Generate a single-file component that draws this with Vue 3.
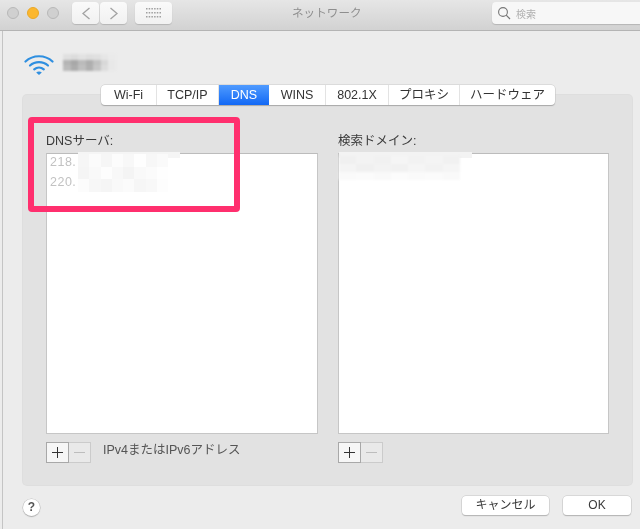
<script setup>
const tabs = [
  { label: 'Wi-Fi', w: 56 },
  { label: 'TCP/IP', w: 62 },
  { label: 'DNS', w: 50, active: true },
  { label: 'WINS', w: 57 },
  { label: '802.1X', w: 63 },
  { label: 'プロキシ', w: 71 },
  { label: 'ハードウェア', w: 95 }
]
const nameCells = ['#e0e0e0','#dcdcdc','#e2e2e2','#dedede','#e0e0e0','#e6e6e6','#eaeaea','#b4b4b4','#a8a8a8','#bbbbbb','#aeaeae','#c2c2c2','#d8d8d8','#e8e8e8','#bbbbbb','#acacac','#bfbfbf','#b0b0b0','#c6c6c6','#dcdcdc','#e8e8e8']
const dnsCells = ['#f6f6f6','#fbfbfb','#f6f6f6','#fcfcfc','#f8f8f8','#fefefe','#f7f7f7','#fafafa','#f5f5f5','#f9f9f9','#fdfdfd','#f8f8f8','#f4f4f4','#f9f9f9','#fbfbfb','#fefefe','#fcfcfc','#f7f7f7','#f5f5f5','#f9f9f9','#fbfbfb','#f6f6f6','#f8f8f8','#fdfdfd']
const domainCells = ['#f0f0f0','#f3f3f3','#f1f1f1','#f5f5f5','#f2f2f2','#f4f4f4','#f1f1f1','#f4f4f4','#f0f0f0','#f3f3f3','#f1f1f1','#f5f5f5','#f2f2f2','#f5f5f5','#fafafa','#fbfbfb','#f9f9f9','#fcfcfc','#fafafa','#fbfbfb','#f9f9f9']
</script>

<template>
  <div class="window">
    <header class="titlebar">
      <div class="lights">
        <span class="light"></span>
        <span class="light amber"></span>
        <span class="light"></span>
      </div>
      <div class="nav">
        <button class="tool"><svg width="10" height="13" viewBox="0 0 10 13"><path d="M8.5 1 2 6.5 8.5 12" fill="none" stroke="#a2a2a2" stroke-width="1.3"/></svg></button>
        <button class="tool"><svg width="10" height="13" viewBox="0 0 10 13"><path d="M1.5 1 8 6.5 1.5 12" fill="none" stroke="#a2a2a2" stroke-width="1.3"/></svg></button>
      </div>
      <button class="tool grid">
        <svg width="15" height="10" viewBox="0 0 15 10" fill="#a0a0a0">
          <g v-for="y in [0,4,8]" :key="y"><rect v-for="x in [0,2.7,5.4,8.1,10.8,13.5]" :key="x" :x="x" :y="y" width="1.5" height="1.5"/></g>
        </svg>
      </button>
      <div class="title">ネットワーク</div>
      <div class="search">
        <svg width="14" height="14" viewBox="0 0 14 14"><circle cx="6" cy="6" r="4.4" fill="none" stroke="#777" stroke-width="1.1"/><path d="m9.2 9.2 3.8 3.8" stroke="#777" stroke-width="1.2"/></svg>
        <span>検索</span>
      </div>
    </header>

    <main class="content">
      <div class="identity">
        <svg class="wifi" width="30" height="23" viewBox="0 0 30 23" fill="none" stroke="#2f8fe0" stroke-linecap="round" stroke-width="2.2">
          <path d="M1.5 8.5C9 1.5 21 1.5 28.5 8.5"/>
          <path d="M6 12.5c5-4.6 13-4.6 18 0"/>
          <path d="M10.2 16.3c2.8-2.4 6.8-2.4 9.6 0"/>
          <path d="M15 22l-2.8-2.6c1.6-1.2 4-1.2 5.6 0z" fill="#2f8fe0" stroke="none"/>
        </svg>
        <div class="name-mosaic"><i v-for="(c, i) in nameCells" :key="i" :style="{ background: c }"></i></div>
      </div>

      <section class="group">
        <nav class="tabs">
          <div v-for="t in tabs" :key="t.label" class="tab" :class="{ active: t.active }" :style="{ width: t.w + 'px' }">{{ t.label }}</div>
        </nav>

        <div class="columns">
          <div class="column">
            <div class="label">DNSサーバ:</div>
            <div class="list">
              <div class="addrs">
                <div class="addr">218.</div>
                <div class="addr">220.</div>
              </div>
              <div class="mosaic dns-strip"></div>
              <div class="mosaic dns-mosaic"><i v-for="(c, i) in dnsCells" :key="i" :style="{ background: c }"></i></div>
            </div>
            <div class="footer">
              <div class="stepper">
                <span class="plus"><svg width="11" height="11" viewBox="0 0 11 11"><path d="M5.5 0v11M0 5.5h11" stroke="#333" stroke-width="1"/></svg></span>
                <span class="minus"><svg width="11" height="11" viewBox="0 0 11 11"><path d="M0 5.5h11" stroke="#bdbdbd" stroke-width="1"/></svg></span>
              </div>
              <span class="hint">IPv4またはIPv6アドレス</span>
            </div>
          </div>
          <div class="column second">
            <div class="label">検索ドメイン:</div>
            <div class="list">
              <div class="mosaic domain-strip"></div>
              <div class="mosaic domain-mosaic"><i v-for="(c, i) in domainCells" :key="i" :style="{ background: c }"></i></div>
            </div>
            <div class="footer">
              <div class="stepper">
                <span class="plus"><svg width="11" height="11" viewBox="0 0 11 11"><path d="M5.5 0v11M0 5.5h11" stroke="#333" stroke-width="1"/></svg></span>
                <span class="minus"><svg width="11" height="11" viewBox="0 0 11 11"><path d="M0 5.5h11" stroke="#bdbdbd" stroke-width="1"/></svg></span>
              </div>
            </div>
          </div>
        </div>
      </section>

      <footer class="actions">
        <button class="help">?</button>
        <div class="right">
          <button class="btn cancel">キャンセル</button>
          <button class="btn ok">OK</button>
        </div>
      </footer>

      <div class="highlight"></div>
    </main>
  </div>
</template>

<style>
html, body { margin: 0; background: #ececec; overflow: hidden; }
</style>

<style scoped>
.window {
  width: 640px;
  height: 529px;
  position: relative;
  overflow: hidden;
  background: #ececec;
  font-family: "Liberation Sans", "Noto Sans CJK JP", sans-serif;
  filter: blur(0.35px);
}
.titlebar {
  height: 31px;
  box-sizing: border-box;
  border-bottom: 1px solid #b4b4b4;
  background: linear-gradient(#e6e6e6, #d2d2d2);
  display: flex;
  align-items: flex-start;
  padding-top: 2px;
  position: relative;
}
.lights { display: flex; gap: 8px; margin: 5px 0 0 7px; width: 65px; }
.light { width: 10px; height: 10px; border-radius: 50%; background: #d0d0d0; border: 1px solid #b8b8b8; box-sizing: content-box; }
.light.amber { background: #fbb72e; border-color: #eaa827; }
.nav { display: flex; gap: 1px; }
.tool {
  width: 27px; height: 22px; padding: 0; border: 0; border-radius: 4px;
  background: linear-gradient(#fafafa, #f1f1f1);
  box-shadow: 0 1px 1px #b5b5b5;
  display: flex; align-items: center; justify-content: center;
}
.grid { width: 37px; margin-left: 8px; }
.title {
  position: absolute; left: 292px; top: 6px;
  font-size: 11.5px; line-height: 15px; color: #8e8e8e; letter-spacing: 0.1px;
}
.search {
  margin-left: auto; width: 148px; height: 22px; box-sizing: border-box;
  background: #f7f7f7; border-radius: 4px 0 0 4px; box-shadow: 0 1px 1px #b5b5b5;
  display: flex; align-items: center; gap: 5px; padding-left: 5px;
  font-size: 10px; color: #b0b0b0;
}
.content {
  height: 498px; box-sizing: border-box; position: relative;
  border-left: 1px solid #c4c4c4; margin-left: 2px;
  padding: 20px 8px 0 20px;
  background: #ececec;
}
.identity { display: flex; align-items: flex-start; gap: 10px; height: 44px; }
.wifi { margin: 2px 0 0 1px; }
.name-mosaic {
  display: grid; grid-template-columns: repeat(7, 7.5px); grid-auto-rows: 5.5px;
  margin: 3px 0 0 -1px; filter: blur(0.8px);
}
.group {
  height: 390px; box-sizing: border-box; position: relative;
  background: #e2e2e2; border-radius: 4px;
  box-shadow: 0 0 0 1px #dedede;
  padding: 39px 23px 0;
}
.tabs {
  position: absolute; left: 78px; top: -10px; display: flex;
  height: 20px; border-radius: 4px; background: #fff; overflow: hidden;
  box-shadow: 0 1px 1px #a9a9a9, 0 0 0 0.5px #c9c9c9;
}
.tab {
  box-sizing: border-box; border-right: 1px solid #e3e3e3;
  font-size: 12.5px; line-height: 20px; text-align: center; color: #333;
}
.tab:last-child { border-right: 0; }
.tab.active { background: linear-gradient(#4f9bff, #1268f5); color: #fff; border-right: 0; }
.columns { display: flex; gap: 20px; }
.column { width: 272px; }
.column.second { width: 271px; }
.label { font-size: 12.5px; line-height: 15px; color: #3a3a3a; height: 19px; }
.list {
  height: 281px; box-sizing: border-box; position: relative;
  background: #fff; border: 1px solid #c6c6c6; border-top-color: #bcbcbc;
  padding: 0 0 0 3px;
}
.addrs { margin-top: -2px; }
.addr { font-size: 12.5px; line-height: 20px; color: #c2c2c2; letter-spacing: 0.5px; }
.mosaic { position: absolute; }
.dns-strip { left: 31px; top: -2px; width: 102px; height: 6px; background: #f5f5f5; filter: blur(0.6px); }
.dns-mosaic {
  display: grid; left: 31px; top: 0; width: 90px; height: 38px;
  grid-template-columns: repeat(8, 1fr); grid-auto-rows: 1fr; filter: blur(0.6px);
}
.domain-strip { left: 0; top: -2px; width: 133px; height: 6px; background: #f3f3f3; filter: blur(0.6px); }
.domain-mosaic {
  display: grid; left: 0; top: 2px; width: 121px; height: 24px;
  grid-template-columns: repeat(7, 1fr); grid-auto-rows: 1fr; filter: blur(0.8px);
}
.footer { display: flex; align-items: flex-start; margin-top: 8px; }
.stepper { display: flex; width: 45px; height: 21px; border: 1px solid #cbcbcb; box-sizing: border-box; }
.plus, .minus {
  flex: 1; display: flex; align-items: center; justify-content: center;
}
.plus { background: #f6f6f6; border: 1px solid #a8a8a8; margin: -1px 0 -1px -1px; }
.minus { background: #e9e9e9; }
.hint { margin-left: 12px; font-size: 12.5px; line-height: 17px; color: #555; }
.actions {
  display: flex; align-items: flex-start; justify-content: space-between;
  padding: 11px 1px 0 0;
}
.help {
  width: 17px; height: 17px; padding: 0; border-radius: 50%;
  border: 0; background: #fff; box-shadow: 0 0 0 0.5px #bbb, 0 1px 1px #aaa;
  font: bold 12px/17px "Liberation Sans", sans-serif; color: #555; margin-top: 3px;
}
.right { display: flex; gap: 14px; }
.btn {
  height: 19px; padding: 0; border: 0; border-radius: 4px; background: #fff;
  box-shadow: 0 0 0 0.5px #c4c4c4, 0 1px 1px #a6a6a6;
  font-family: "Liberation Sans", "Noto Sans CJK JP", sans-serif;
  font-size: 12px; line-height: 19px; color: #3a3a3a;
}
.cancel { width: 87px; }
.ok { width: 68px; }
.highlight {
  position: absolute; left: 25px; top: 86px; width: 212px; height: 95px;
  box-sizing: border-box; border: 6.5px solid #ff2f6e; border-radius: 4px;
}
</style>
